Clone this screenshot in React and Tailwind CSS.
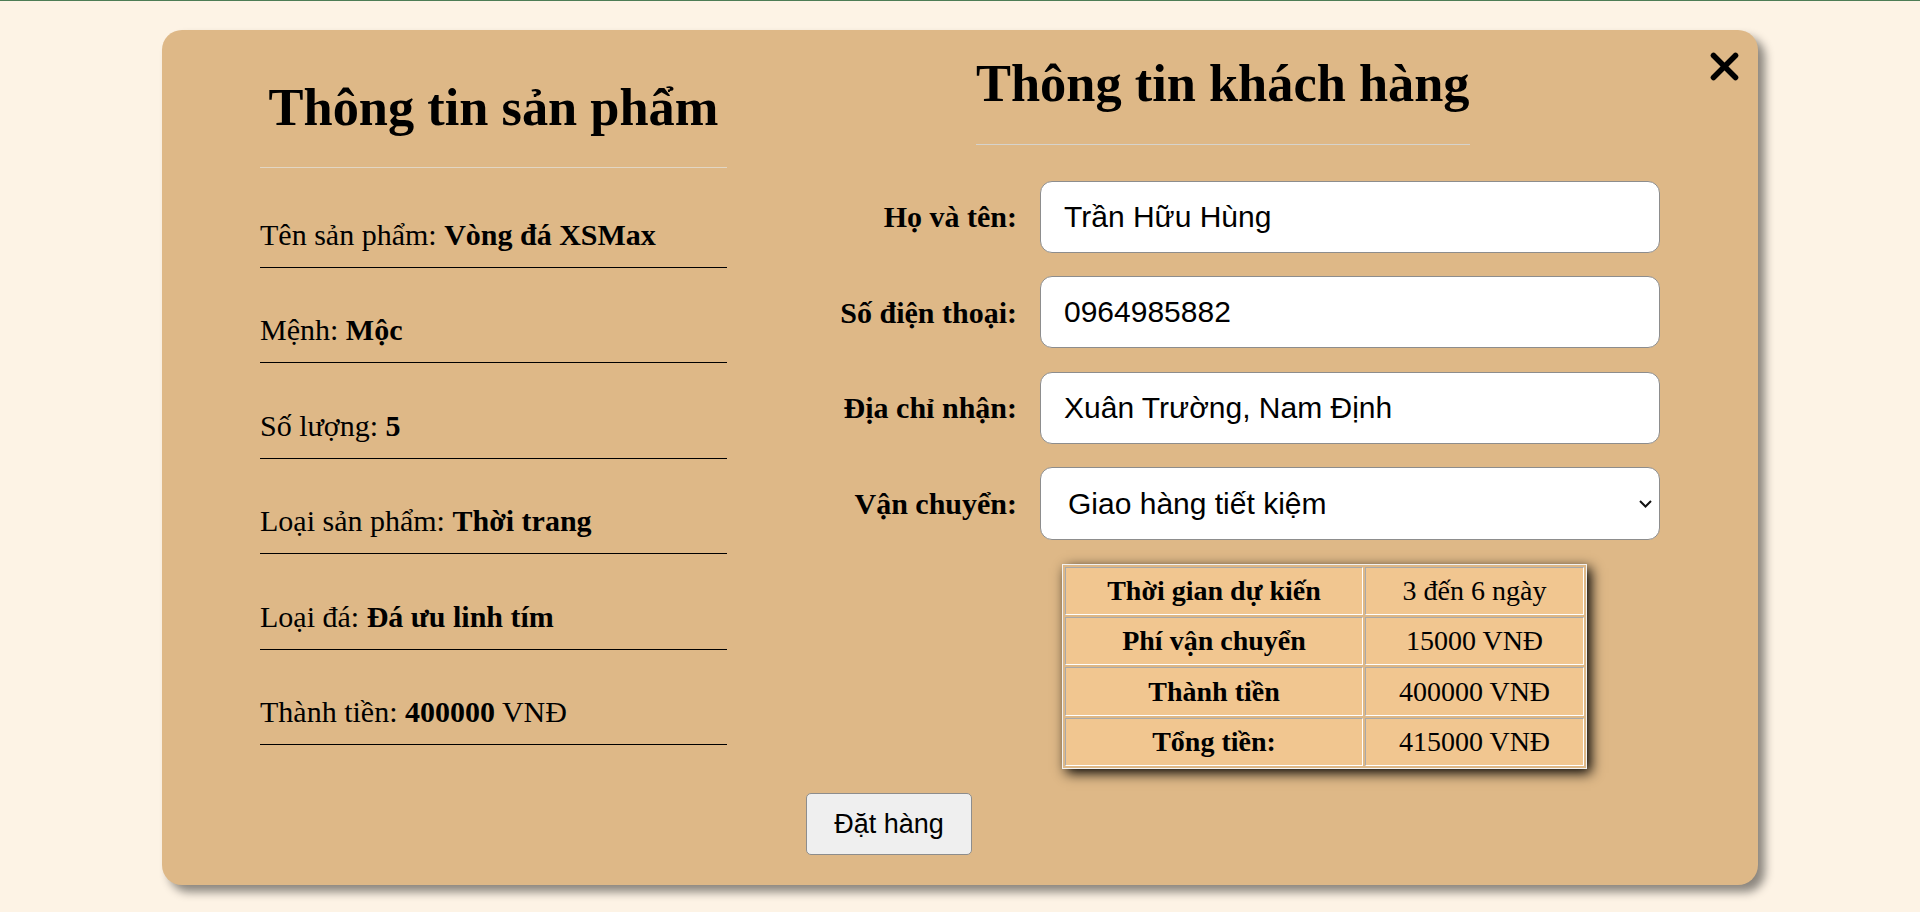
import { useState } from "react";

const product = [
    { label: "Tên sản phẩm:", value: "Vòng đá XSMax" },
    { label: "Mệnh:", value: "Mộc" },
    { label: "Số lượng:", value: "5" },
    { label: "Loại sản phẩm:", value: "Thời trang" },
    { label: "Loại đá:", value: "Đá ưu linh tím" },
    { label: "Thành tiền:", value: "400000", unit: " VNĐ" },
];

const summary = [
    ["Thời gian dự kiến", "3 đến 6 ngày"],
    ["Phí vận chuyển", "15000 VNĐ"],
    ["Thành tiền", "400000 VNĐ"],
    ["Tổng tiền:", "415000 VNĐ"],
];

const serif = "font-['Liberation_Serif','Times_New_Roman',serif]";
const sans = "font-['Liberation_Sans',Arial,sans-serif]";

const CheckoutPage = () => {
    const [fullName, setFullName] = useState("Trần Hữu Hùng");
    const [phone, setPhone] = useState("0964985882");
    const [address, setAddress] = useState("Xuân Trường, Nam Định");
    const [shipping, setShipping] = useState("tiet-kiem");

    const fields = [
        { label: "Họ và tên:", value: fullName, onChange: setFullName },
        { label: "Số điện thoại:", value: phone, onChange: setPhone },
        { label: "Địa chỉ nhận:", value: address, onChange: setAddress },
    ];

    return (
        <div className={`min-h-screen bg-[#fdf3e5] ${serif} text-black`}>
            <div className="h-px bg-[#4d7c55]"></div>

            <div className="relative mx-auto mt-[29px] w-[1596px] rounded-[20px] bg-[#deb887] px-[98px] pt-[22.5px] pb-[30px] shadow-[7px_7px_10px_rgba(0,0,0,0.45)] flex items-start gap-[79px]">
                {/* close button */}
                <button className="absolute top-[22px] right-[19px] cursor-pointer">
                    <svg width="29" height="29" viewBox="0 0 29 29">
                        <line x1="3.5" y1="3.5" x2="25.5" y2="25.5" stroke="black" strokeWidth="5.5" strokeLinecap="round" />
                        <line x1="25.5" y1="3.5" x2="3.5" y2="25.5" stroke="black" strokeWidth="5.5" strokeLinecap="round" />
                    </svg>
                </button>

                {/* product info */}
                <div className="w-[467px] mt-[24.25px]">
                    <h2 className="text-center text-[52.4px] leading-[60px] font-bold">Thông tin sản phẩm</h2>
                    <div className="mt-[30px] mb-[4.6px] h-px bg-[#e2d6c4]"></div>
                    {product.map((item) => (
                        <div key={item.label} className="pt-[45.5px] pb-[15px] border-b border-black text-[30px] leading-[34px]">
                            {item.label} <b>{item.value}</b>
                            {item.unit}
                        </div>
                    ))}
                </div>

                {/* customer info */}
                <div className="w-[854px] flex flex-col">
                    <div className="self-start ml-[170px] flex flex-col">
                        <h2 className="text-[52.4px] leading-[60px] font-bold whitespace-nowrap">Thông tin khách hàng</h2>
                        <div className="mt-[31.5px] h-px bg-[#d6d3cc]"></div>
                    </div>

                    <div className="mt-[35.7px] flex flex-col gap-[23.5px]">
                        {fields.map((f) => (
                            <div key={f.label} className="flex items-center gap-[23px]">
                                <label className="w-[211px] text-right text-[30px] font-bold whitespace-nowrap">{f.label}</label>
                                <input
                                    value={f.value}
                                    onChange={(e) => f.onChange(e.target.value)}
                                    className={`w-[620px] h-[72px] rounded-[12px] border border-[#8d8d8d] bg-white pl-[23px] text-[30px] outline-none ${sans}`}
                                    type="text"
                                />
                            </div>
                        ))}
                        <div className="flex items-center gap-[23px]">
                            <label className="w-[211px] text-right text-[30px] font-bold whitespace-nowrap">Vận chuyển:</label>
                            <div className="relative">
                                <select
                                    value={shipping}
                                    onChange={(e) => setShipping(e.target.value)}
                                    className={`appearance-none w-[620px] h-[72.6px] rounded-[12px] border border-[#8d8d8d] bg-white pl-[27px] pr-[30px] text-[30px] outline-none ${sans}`}
                                >
                                    <option value="tiet-kiem">Giao hàng tiết kiệm</option>
                                    <option value="nhanh">Giao hàng nhanh</option>
                                </select>
                                <svg className="pointer-events-none absolute right-[8px] top-[32.5px]" width="13" height="8" viewBox="0 0 13 8">
                                    <polyline points="1,1 6.5,6.5 12,1" fill="none" stroke="#111" strokeWidth="2" />
                                </svg>
                            </div>
                        </div>
                    </div>

                    <table className="mt-[24.2px] ml-[256px] w-[525px] border border-[#f2f2f2] border-separate border-spacing-[2px] shadow-[4px_4px_12px_#000] text-[28px]">
                        <tbody>
                            {summary.map(([k, v]) => (
                                <tr key={k}>
                                    <td className="w-[298px] h-[48.25px] bg-[#f1c690] border border-t-[#a9a9a9] border-l-[#a9a9a9] border-b-white border-r-white text-center font-bold">
                                        {k}
                                    </td>
                                    <td className="h-[48.25px] bg-[#f1c690] border border-t-[#a9a9a9] border-l-[#a9a9a9] border-b-white border-r-white text-center">
                                        {v}
                                    </td>
                                </tr>
                            ))}
                        </tbody>
                    </table>

                    <button className={`mt-[23.7px] w-[166px] h-[62.3px] rounded-[5px] border border-[#8d8d8d] bg-[#efefef] text-[27px] cursor-pointer ${sans}`}>
                        Đặt hàng
                    </button>
                </div>
            </div>
        </div>
    );
};

export default CheckoutPage;
